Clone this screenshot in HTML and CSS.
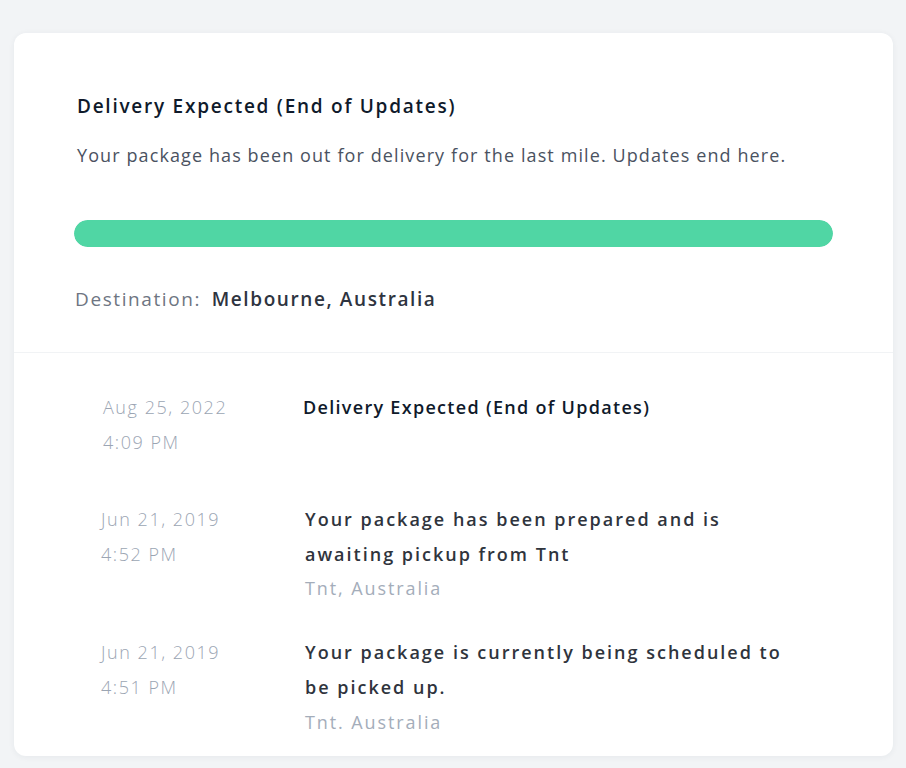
FILE: index.html
```html
<!DOCTYPE html>
<html lang="en">
<head>
    <meta charset="UTF-8">
    <meta name="viewport" content="width=device-width, initial-scale=1.0">
    <title>Tracking</title>
    <link rel="stylesheet" href="styles.css">
</head>
<body>
    <div class="card">
        <div class="summary">
            <h2 class="status">Delivery Expected (End of Updates)</h2>
            <p class="status-text">Your package has been out for delivery for the last mile. Updates end here.</p>
            <div class="progress"><div class="progress-fill" style="width: 100%"></div></div>
            <p class="destination"><span class="dest-label">Destination:</span> <strong>Melbourne, Australia</strong></p>
        </div>

        <ul class="timeline">
            <li class="event event-first">
                <div class="when">
                    <div>Aug 25, 2022</div>
                    <div>4:09 PM</div>
                </div>
                <div class="what">
                    <div class="event-title latest">Delivery Expected (End of Updates)</div>
                </div>
            </li>
            <li class="event">
                <div class="when">
                    <div>Jun 21, 2019</div>
                    <div>4:52 PM</div>
                </div>
                <div class="what">
                    <div class="event-title">Your package has been prepared and is awaiting pickup from Tnt</div>
                    <div class="event-place">Tnt, Australia</div>
                </div>
            </li>
            <li class="event">
                <div class="when">
                    <div>Jun 21, 2019</div>
                    <div>4:51 PM</div>
                </div>
                <div class="what">
                    <div class="event-title">Your package is currently being scheduled to be picked up.</div>
                    <div class="event-place">Tnt. Australia</div>
                </div>
            </li>
        </ul>
    </div>
</body>
</html>
```

FILE: styles.css
```css
body {
    margin: 0;
    padding: 33px 13px 13px 14px;
    background-color: #f2f4f6;
    font-family: "Open Sans", "Liberation Sans", sans-serif;
    color: #333;
}
.card {
    background-color: #fff;
    border-radius: 12px;
    box-shadow: 0 1px 6px rgba(30, 45, 70, 0.06);
    overflow: hidden;
}
.summary {
    padding: 61px 60px 41px 60px;
    border-bottom: 1px solid #f1f3f5;
}
.status {
    margin: 0 0 0 3px;
    font-size: 19px;
    line-height: 24px;
    font-weight: 600;
    letter-spacing: 1.75px;
    color: #0f1a2b;
}
.status-text {
    margin: 25px 0 0 3px;
    font-size: 18px;
    line-height: 24px;
    letter-spacing: 1.1px;
    color: #4a5261;
}
.progress {
    margin-top: 53px;
    height: 27px;
    border-radius: 14px;
    background-color: #eef1f4;
    overflow: hidden;
}
.progress-fill {
    height: 100%;
    border-radius: 14px;
    background-color: #50d6a4;
}
.destination {
    margin: 40px 0 0 1px;
    font-size: 19px;
    line-height: 24px;
    letter-spacing: 1.6px;
    color: #2e3440;
}
.dest-label {
    color: #6e7582;
    margin-right: 4px;
}
.destination strong {
    font-weight: 600;
}
.timeline {
    list-style: none;
    margin: 0;
    padding: 37px 0 17px 87px;
}
.event {
    display: flex;
    padding-bottom: 29px;
    font-size: 18px;
    line-height: 34.7px;
}
.event:last-child {
    padding-bottom: 0;
}
.event-first {
    min-height: 83px;
}
.when {
    width: 204px;
    flex-shrink: 0;
    color: #9ba5b3;
    font-weight: 300;
    letter-spacing: 1.55px;
}
.event-first .when {
    padding-left: 2px;
    width: 202px;
}
.what {
    width: 496px;
}
.event-title {
    font-weight: 600;
    letter-spacing: 2px;
    color: #2f343d;
}
.event-first .event-title {
    margin-left: -2px;
}
.event-title.latest {
    letter-spacing: 1.3px;
    color: #0f1a2b;
}
.event-place {
    color: #a4adba;
    letter-spacing: 1.9px;
}
```
